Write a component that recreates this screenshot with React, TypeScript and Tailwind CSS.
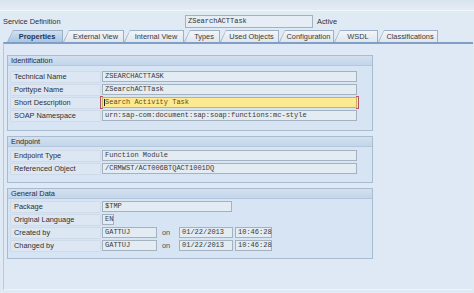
import React from "react";

const TABS = [
  { label: "Properties", w: 56, active: true },
  { label: "External View", w: 61 },
  { label: "Internal View", w: 60 },
  { label: "Types", w: 36 },
  { label: "Used Objects", w: 59 },
  { label: "Configuration", w: 55 },
  { label: "WSDL", w: 44 },
  { label: "Classifications", w: 60 },
];

function Tab({ label, w, active }: { label: string; w: number; active?: boolean }) {
  return (
    <div
      className="h-[12px] bg-[#9db0c6] pt-px pr-px [clip-path:polygon(6px_0,100%_0,100%_100%,0_100%)]"
      style={{ width: w }}
    >
      <div
        className={
          "flex h-full items-center justify-center pl-[5px] [clip-path:polygon(6px_0,100%_0,100%_100%,1px_100%)] " +
          (active
            ? "bg-gradient-to-b from-[#cfe0f2] to-[#a9c5e4] font-bold text-[#1f3550]"
            : "bg-gradient-to-b from-[#f2f5f8] to-[#dfe6ee] text-[#3a3a3a]")
        }
      >
        {label}
      </div>
    </div>
  );
}

function Field({ value, w, yellow }: { value: string; w: number; yellow?: boolean }) {
  return (
    <div
      className={
        "relative flex h-[11px] items-center border px-[2px] font-['Liberation_Mono',monospace] text-[7px] leading-none " +
        (yellow
          ? "border-[#c9b45c] bg-[#fde98f] text-[#6b4a1a]"
          : "border-[#a4b2c0] bg-[#e3ebf3] text-[#3a3a3a]")
      }
      style={{ width: w }}
    >
      {yellow && (
        <>
          {/* focus brackets */}
          <span className="absolute -left-[3px] -top-[2px] h-[13px] w-[3px] border-y border-l border-[#b0566a]" />
          <span className="absolute -right-[3px] -top-[2px] h-[13px] w-[3px] border-y border-r border-[#b0566a]" />
          <span className="absolute left-[1px] top-[1px] h-[7px] w-px bg-[#222]" />
        </>
      )}
      {value}
    </div>
  );
}

function Row({ label, children }: { label: string; children: React.ReactNode }) {
  return (
    <div className="flex h-[13px] items-center">
      <div className="flex h-[12px] w-[91px] items-center rounded-[1px] border border-[#cfdbe8] bg-[#dce7f3] pl-[3px] text-[#2f2f2f]">
        {label}
      </div>
      <div className="ml-[1px] flex items-center">{children}</div>
    </div>
  );
}

function Group({ title, children, pt, pb }: { title: string; children: React.ReactNode; pt: string; pb: string }) {
  return (
    <div className={"w-[366px] border border-[#a9bccf] bg-[#d6e4f3] " + pb}>
      <div className="flex h-[10px] items-center border-b border-[#b4c7dc] bg-gradient-to-b from-[#d3e1f0] to-[#c2d5ea] pl-[3px] text-[#2b2b2b]">
        {title}
      </div>
      <div className={"flex flex-col pl-[2px] " + pt}>{children}</div>
    </div>
  );
}

export default function App() {
  return (
    <div className="flex h-[293px] w-[474px] flex-col overflow-hidden bg-[#e0eaf5] font-['Liberation_Sans',Arial,sans-serif] text-[7.4px] text-[#2f2f2f]">
      <div className="h-[11px] border-b border-[#f2f6fa] bg-gradient-to-b from-[#d9e4ef] to-[#e4ecf5]" />
      <div className="flex h-[19px] items-center pl-[3px] pt-[2px]">
        <div className="w-[182px]">Service Definition</div>
        <div className="flex h-[13px] w-[128px] items-center border border-[#a4b2c0] bg-[#e6edf5] px-[2px] font-['Liberation_Mono',monospace] text-[7px] text-[#333]">
          ZSearchACTTask
        </div>
        <div className="ml-[4px]">Active</div>
      </div>
      <div className="flex h-[12px] items-end pl-[7px]">
        {TABS.map((t) => (
          <Tab key={t.label} {...t} />
        ))}
      </div>
      <div className="flex flex-1 pr-[1px] pb-[3px] pl-[3px]">
        <div className="flex flex-1 flex-col border-l border-t-2 border-b border-[#7f9fc6] border-l-[#b8c8da] border-b-[#eef3f8] bg-[#dfe9f5] pl-[3px] pt-[11px]">
          <Group title="Identification" pt="pt-[4px]" pb="pb-[8px]">
            <Row label="Technical Name">
              <Field value="ZSEARCHACTTASK" w={255} />
            </Row>
            <Row label="Porttype Name">
              <Field value="ZSearchACTTask" w={255} />
            </Row>
            <Row label="Short Description">
              <Field value="Search Activity Task" w={255} yellow />
            </Row>
            <Row label="SOAP Namespace">
              <Field value="urn:sap-com:document:sap:soap:functions:mc-style" w={255} />
            </Row>
          </Group>
          <div className="h-[5px]" />
          <Group title="Endpoint" pt="pt-[2px]" pb="pb-[7px]">
            <Row label="Endpoint Type">
              <Field value="Function Module" w={255} />
            </Row>
            <Row label="Referenced Object">
              <Field value="/CRMWST/ACT006BTQACT1001DQ" w={255} />
            </Row>
          </Group>
          <div className="h-[5px]" />
          <Group title="General Data" pt="pt-[1px]" pb="pb-[6px]">
            <Row label="Package">
              <Field value="$TMP" w={130} />
            </Row>
            <Row label="Original Language">
              <Field value="EN" w={12} />
            </Row>
            <Row label="Created by">
              <Field value="GATTUJ" w={55} />
              <span className="ml-[5px] w-[17px] text-[#555]">on</span>
              <Field value="01/22/2013" w={54} />
              <div className="w-[2px]" />
              <Field value="10:46:28" w={37} />
            </Row>
            <Row label="Changed by">
              <Field value="GATTUJ" w={55} />
              <span className="ml-[5px] w-[17px] text-[#555]">on</span>
              <Field value="01/22/2013" w={54} />
              <div className="w-[2px]" />
              <Field value="10:46:28" w={37} />
            </Row>
          </Group>
        </div>
      </div>
    </div>
  );
}
